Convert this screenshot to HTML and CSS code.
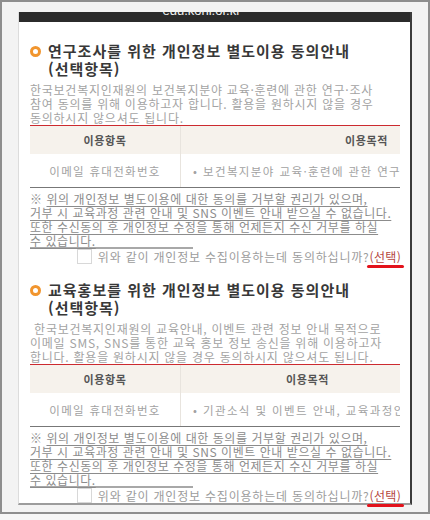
FILE: index.html
```html
<!DOCTYPE html>
<html lang="ko">
<head>
<meta charset="utf-8">
<title>개인정보 별도이용 동의안내</title>
<link rel="stylesheet" href="styles.css">
</head>
<body>
<div class="frame">
  <div class="card">
    <div class="urlbar"><span class="url">edu.kohi.or.kr</span></div>
    <div class="content">
      <section class="sec">
        <h2 class="heading"><span class="dot"></span><span class="htext">연구조사를 위한 개인정보 별도이용 동의안내<br>(선택항목)</span></h2>
        <p class="desc">한국보건복지인재원의 보건복지분야 교육·훈련에 관한 연구·조사<br>참여 동의를 위해 이용하고자 합니다. 활용을 원하시지 않을 경우<br>동의하시지 않으셔도 됩니다.</p>
        <div class="tbl-wrap">
          <div class="tbl">
            <div class="tr thead">
              <div class="c1 th">이용항목</div>
              <div class="c2 c2-a th">이용목적</div>
            </div>
            <div class="tr tbody">
              <div class="c1 td">이메일 휴대전화번호</div>
              <div class="c2 c2-a td td-r">• 보건복지분야 교육·훈련에 관한 연구·조사 참여</div>
            </div>
          </div>
        </div>
        <p class="note">※ <span class="u">위의 개인정보 별도이용에 대한 동의를 거부할 권리가 있으며,<br>거부 시 교육과정 관련 안내 및 SNS 이벤트 안내 받으실 수 없습니다.<br>또한 수신동의 후 개인정보 수정을 통해 언제든지 수신 거부를 하실<br>수 있습니다.</span></p>
        <div class="rule"></div>
        <label class="agree"><span class="box"></span><span class="atext">위와 같이 개인정보 수집이용하는데 동의하십니까?<span class="opt">(선택)</span></span></label>
      </section>
      <section class="sec sec-2">
        <h2 class="heading"><span class="dot"></span><span class="htext">교육홍보를 위한 개인정보 별도이용 동의안내<br>(선택항목)</span></h2>
        <p class="desc">&nbsp;한국보건복지인재원의 교육안내, 이벤트 관련 정보 안내 목적으로<br>이메일 SMS, SNS를 통한 교육 홍보 정보 송신을 위해 이용하고자<br>합니다. 활용을 원하시지 않을 경우 동의하시지 않으셔도 됩니다.</p>
        <div class="tbl-wrap">
          <div class="tbl">
            <div class="tr thead">
              <div class="c1 th">이용항목</div>
              <div class="c2 c2-b th">이용목적</div>
            </div>
            <div class="tr tbody">
              <div class="c1 td">이메일 휴대전화번호</div>
              <div class="c2 c2-b td td-r">• 기관소식 및 이벤트 안내, 교육과정안내</div>
            </div>
          </div>
        </div>
        <p class="note">※ <span class="u">위의 개인정보 별도이용에 대한 동의를 거부할 권리가 있으며,<br>거부 시 교육과정 관련 안내 및 SNS 이벤트 안내 받으실 수 없습니다.<br>또한 수신동의 후 개인정보 수정을 통해 언제든지 수신 거부를 하실<br>수 있습니다.</span></p>
        <div class="rule"></div>
        <label class="agree"><span class="box"></span><span class="atext">위와 같이 개인정보 수집이용하는데 동의하십니까?<span class="opt">(선택)</span></span></label>
      </section>
    </div>
  </div>
</div>
</body>
</html>
```

FILE: styles.css
```css
* { box-sizing: border-box; }

html, body {
  margin: 0;
  padding: 0;
  background: #f6f6f6;
  font-family: "Noto Sans CJK KR", "Noto Sans", sans-serif;
}

.frame {
  width: 430px;
  height: 514px;
  border: 2px solid #8e8e8e;
  background: #f3f3f3;
  padding: 10px 16px 0 16px;
}

.card {
  width: 394px;
  background: #fff;
  border-left: 1px solid #dcdcdc;
  border-right: 2px solid #3c3c3c;
  border-bottom: 2px solid #9c9c9c;
}

.urlbar {
  height: 10px;
  background: #2b2b2b;
  overflow: hidden;
  text-align: center;
  padding-right: 26px;
}

.url {
  display: block;
  margin-top: -8px;
  line-height: 14px;
  font-family: "Liberation Sans", sans-serif;
  font-size: 13px;
  color: #f2f2f2;
}

.content {
  padding: 0 10px 0 11px;
}

.sec { padding-top: 20px; }
.sec-2 { padding-top: 17px; }

.heading {
  display: flex;
  align-items: flex-start;
  margin: 0;
  font-size: 15px;
  line-height: 18px;
  font-weight: 700;
  letter-spacing: 1px;
  color: #383838;
}

.dot {
  flex: none;
  width: 11px;
  height: 11px;
  margin: 4px 7px 0 0;
  border-radius: 50%;
  border: 3px solid #f1952e;
  background: #fff;
}

.desc {
  margin: 5px 0 0;
  font-size: 12px;
  line-height: 14px;
  letter-spacing: 0.75px;
  color: #a3a3a3;
  white-space: nowrap;
  border-bottom: 1px solid #cc2a2f;
}

.tbl-wrap {
  width: 370px;
  overflow: hidden;
  border-bottom: 1px solid #777;
}

.tbl { width: max-content; }

.tr { display: flex; }
.thead { height: 28px; background: #f6f2ec; }
.tbody { height: 33px; }

.c1 { flex: none; width: 150px; }
.c2 { flex: none; border-left: 1px solid #e8e4de; }
.c2-a { width: 372px; }
.c2-b { width: 254px; }

.th {
  display: flex;
  align-items: center;
  justify-content: center;
  font-size: 11px;
  font-weight: 700;
  letter-spacing: 0.6px;
  color: #555;
  white-space: nowrap;
}

.td {
  display: flex;
  align-items: center;
  justify-content: center;
  font-size: 11.5px;
  letter-spacing: 1.3px;
  color: #a2a2a2;
  white-space: nowrap;
  overflow: hidden;
}

.td-r { justify-content: flex-start; padding-left: 12px; letter-spacing: 1.4px; }

.note {
  margin: 4px 0 0;
  font-size: 12px;
  line-height: 14px;
  letter-spacing: 0.55px;
  color: #8c8c8c;
  white-space: nowrap;
}

.u { text-decoration: underline; text-underline-offset: 2px; }

.rule {
  width: 163px;
  height: 2px;
  margin-top: -1px;
  background: #a8a8a8;
}

.agree {
  display: flex;
  justify-content: flex-end;
  align-items: center;
  gap: 6px;
  height: 15px;
  margin-top: 0;
  font-size: 12px;
  letter-spacing: 0.8px;
  color: #9c9c9c;
  white-space: nowrap;
}

.atext { letter-spacing: 0.8px; margin-right: -1px; }

.box {
  width: 15px;
  height: 15px;
  border: 1px solid #d8d8d8;
  background: #fff;
}

.opt {
  position: relative;
  color: #b4463e;
  letter-spacing: 0.3px;
}

.opt::after {
  content: "";
  position: absolute;
  left: -3px;
  right: -3px;
  bottom: -3px;
  height: 3px;
  border-radius: 2px;
  background: #e3121b;
}
```
